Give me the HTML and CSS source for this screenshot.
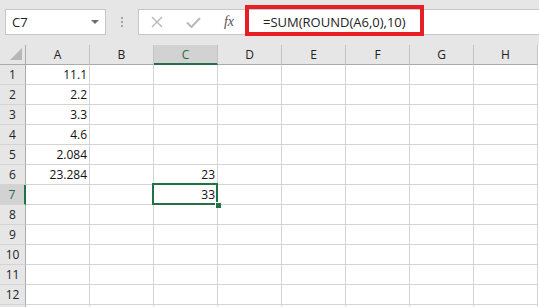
FILE: index.html
```html
<!DOCTYPE html>
<html lang="en">
<head>
  <meta charset="UTF-8">
  <title>Sheet1</title>
  <link rel="stylesheet" href="styles.css">
</head>
<body>
  <!-- Name box + formula bar -->
  <div class="toolbar">
    <div class="namebox">
      <span class="ref">C7</span>
      <span class="arrow"></span>
    </div>
    <div class="grip"><i></i><i></i><i></i></div>
    <div class="formula">
      <div class="fbtns">
        <span class="fbtn">
          <svg width="12" height="12" viewBox="0 0 12 12"><path d="M1 1 L11 11 M11 1 L1 11" stroke="#b8b8b8" stroke-width="1.4" fill="none"/></svg>
        </span>
        <span class="fbtn">
          <svg width="15" height="11" viewBox="0 0 15 11"><path d="M1 5.5 L5.5 10 L14 1" stroke="#b8b8b8" stroke-width="2" fill="none"/></svg>
        </span>
        <span class="fbtn fx">fx</span>
      </div>
      <div class="ftext">=SUM(ROUND(A6,0),10)</div>
      <div class="highlight"></div>
    </div>
  </div>

  <!-- Grid -->
  <div class="sheet">
    <div class="corner"><span class="tri"></span></div>
    <div class="ch">A</div><div class="ch">B</div><div class="ch active">C</div><div class="ch">D</div>
    <div class="ch">E</div><div class="ch">F</div><div class="ch">G</div><div class="ch">H</div>

    <div class="rh">1</div><div class="c">11.1</div><div class="c"></div><div class="c"></div><div class="c"></div><div class="c"></div><div class="c"></div><div class="c"></div><div class="c"></div>
    <div class="rh">2</div><div class="c">2.2</div><div class="c"></div><div class="c"></div><div class="c"></div><div class="c"></div><div class="c"></div><div class="c"></div><div class="c"></div>
    <div class="rh">3</div><div class="c">3.3</div><div class="c"></div><div class="c"></div><div class="c"></div><div class="c"></div><div class="c"></div><div class="c"></div><div class="c"></div>
    <div class="rh">4</div><div class="c">4.6</div><div class="c"></div><div class="c"></div><div class="c"></div><div class="c"></div><div class="c"></div><div class="c"></div><div class="c"></div>
    <div class="rh">5</div><div class="c">2.084</div><div class="c"></div><div class="c"></div><div class="c"></div><div class="c"></div><div class="c"></div><div class="c"></div><div class="c"></div>
    <div class="rh">6</div><div class="c">23.284</div><div class="c"></div><div class="c">23</div><div class="c"></div><div class="c"></div><div class="c"></div><div class="c"></div><div class="c"></div>
    <div class="rh active">7</div><div class="c"></div><div class="c"></div><div class="c sel">33</div><div class="c"></div><div class="c"></div><div class="c"></div><div class="c"></div><div class="c"></div>
    <div class="rh">8</div><div class="c"></div><div class="c"></div><div class="c"></div><div class="c"></div><div class="c"></div><div class="c"></div><div class="c"></div><div class="c"></div>
    <div class="rh">9</div><div class="c"></div><div class="c"></div><div class="c"></div><div class="c"></div><div class="c"></div><div class="c"></div><div class="c"></div><div class="c"></div>
    <div class="rh">10</div><div class="c"></div><div class="c"></div><div class="c"></div><div class="c"></div><div class="c"></div><div class="c"></div><div class="c"></div><div class="c"></div>
    <div class="rh">11</div><div class="c"></div><div class="c"></div><div class="c"></div><div class="c"></div><div class="c"></div><div class="c"></div><div class="c"></div><div class="c"></div>
    <div class="rh">12</div><div class="c"></div><div class="c"></div><div class="c"></div><div class="c"></div><div class="c"></div><div class="c"></div><div class="c"></div><div class="c"></div>
    <div class="rh"></div><div class="c"></div><div class="c"></div><div class="c"></div><div class="c"></div><div class="c"></div><div class="c"></div><div class="c"></div><div class="c"></div>
  </div>
</body>
</html>
```

FILE: styles.css
```css
body {
  margin: 0;
  background: #e6e6e6;
  font-family: "Open Sans", sans-serif;
  color: #222;
  overflow: hidden;
}

.toolbar {
  height: 45px;
  display: flex;
  align-items: flex-start;
  padding: 9px 0 0 5px;
  box-sizing: border-box;
}

.namebox {
  width: 101px;
  height: 26px;
  box-sizing: border-box;
  border: 1px solid #c6c6c6;
  background: #fff;
  display: flex;
  align-items: center;
  justify-content: space-between;
  padding: 0 6px 0 6px;
}

.ref {
  font-size: 13px;
  color: #222;
}

.arrow {
  width: 0;
  height: 0;
  border-left: 4px solid transparent;
  border-right: 4px solid transparent;
  border-top: 4px solid #6e6e6e;
}

.grip {
  width: 32px;
  height: 26px;
  display: flex;
  flex-direction: column;
  align-items: center;
  justify-content: center;
  gap: 2px;
}

.grip i {
  display: block;
  width: 2px;
  height: 2px;
  background: #a6a6a6;
}

.formula {
  flex: 1;
  height: 26px;
  box-sizing: border-box;
  border: 1px solid #c6c6c6;
  border-right: none;
  background: #fff;
  display: flex;
  align-items: center;
  position: relative;
}

.fbtns {
  display: flex;
  width: 108px;
}

.fbtn {
  width: 36px;
  display: flex;
  justify-content: center;
  align-items: center;
}

.fx {
  font-family: "Liberation Serif", serif;
  font-style: italic;
  font-size: 14px;
  color: #555;
}

.ftext {
  padding-left: 16px;
  font-size: 13px;
  color: #222;
}

.highlight {
  position: absolute;
  left: 106px;
  top: -5px;
  width: 179px;
  height: 31px;
  box-sizing: border-box;
  border: 4px solid #e81e25;
}

.sheet {
  display: grid;
  grid-template-columns: 26px repeat(8, 64px);
  grid-auto-rows: 20px;
  background: #fff;
}

.corner, .ch, .rh, .c {
  box-sizing: border-box;
}

.corner {
  background: #e6e6e6;
  border-right: 1px solid #ababab;
  border-bottom: 1px solid #ababab;
  display: flex;
  justify-content: flex-end;
  align-items: flex-end;
  padding: 0 3px 4px 0;
}

.tri {
  width: 0;
  height: 0;
  border-left: 12px solid transparent;
  border-bottom: 12px solid #b7b7b7;
}

.ch {
  background: #e6e6e6;
  border-right: 1px solid #c3c3c3;
  border-bottom: 1px solid #ababab;
  text-align: center;
  font-size: 12px;
  line-height: 19px;
}

.ch.active {
  background: #d2d2d2;
  border-bottom: 2px solid #217346;
  color: #1d6b40;
}

.rh {
  background: #e6e6e6;
  border-right: 1px solid #ababab;
  border-bottom: 1px solid #d4d4d4;
  text-align: center;
  font-size: 12px;
  line-height: 20px;
}

.rh.active {
  background: #d2d2d2;
  border-right: 2px solid #217346;
  color: #1d6b40;
}

.c {
  border-right: 1px solid #d4d4d4;
  border-bottom: 1px solid #d4d4d4;
  text-align: right;
  padding-right: 2px;
  font-size: 12px;
  line-height: 20px;
  color: #111;
}

.sel {
  position: relative;
}

.sel::after {
  content: "";
  position: absolute;
  left: -2px;
  top: -2px;
  right: -1px;
  bottom: -1px;
  border: 2px solid #217346;
}

.sel::before {
  content: "";
  position: absolute;
  right: -4px;
  bottom: -4px;
  width: 5px;
  height: 5px;
  background: #217346;
  border-left: 1px solid #fff;
  border-top: 1px solid #fff;
  z-index: 1;
}
```
